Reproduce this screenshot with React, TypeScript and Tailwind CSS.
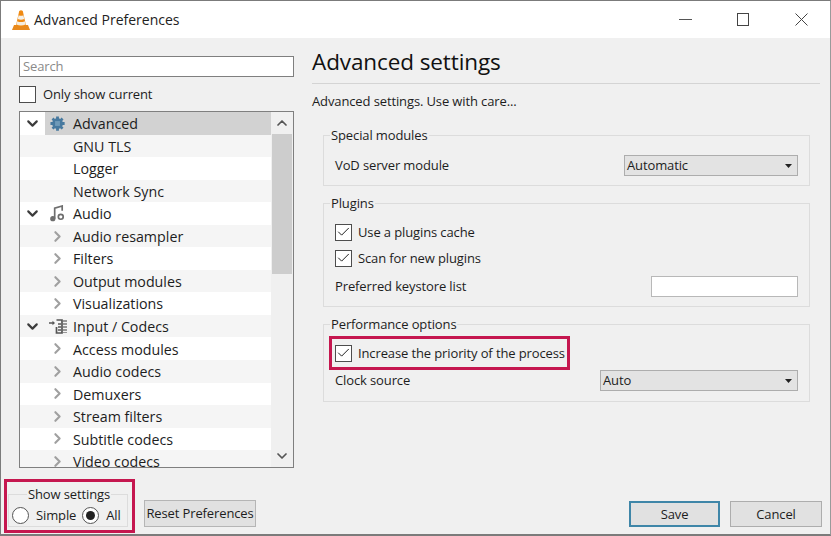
import { Check, ChevronDown, ChevronRight, ChevronUp } from 'lucide-react';
import type { ReactNode } from 'react';

const font = { fontFamily: '"Open Sans", "Noto Sans", sans-serif' };

type TreeRow = { label: string; level: 0 | 1 | 2; icon?: 'gear' | 'music' | 'codec' };

const treeRows: TreeRow[] = [
  { label: 'Advanced', level: 0, icon: 'gear' },
  { label: 'GNU TLS', level: 2 },
  { label: 'Logger', level: 2 },
  { label: 'Network Sync', level: 2 },
  { label: 'Audio', level: 0, icon: 'music' },
  { label: 'Audio resampler', level: 1 },
  { label: 'Filters', level: 1 },
  { label: 'Output modules', level: 1 },
  { label: 'Visualizations', level: 1 },
  { label: 'Input / Codecs', level: 0, icon: 'codec' },
  { label: 'Access modules', level: 1 },
  { label: 'Audio codecs', level: 1 },
  { label: 'Demuxers', level: 1 },
  { label: 'Stream filters', level: 1 },
  { label: 'Subtitle codecs', level: 1 },
  { label: 'Video codecs', level: 1 },
];

const VlcCone = () => (
  <svg width="20" height="22" viewBox="0 0 20 22">
    <path d="M1 21 L3 16 H17 L19 21 Z" fill="#e8891c" />
    <path d="M8.2 2 Q10 0.5 11.8 2 L15 16.5 Q10 19 5 16.5 Z" fill="#f08a12" />
    <path d="M7.6 6.2 Q10 7.4 12.4 6.2 L13.2 10 Q10 11.4 6.8 10 Z" fill="#f4f1ea" />
    <path d="M6.2 12.2 Q10 14 13.8 12.2 L14.6 15.6 Q10 17.6 5.4 15.6 Z" fill="#f4ede0" />
  </svg>
);

const GearIcon = () => (
  <svg width="15" height="15" viewBox="0 0 16 16">
    <path
      d="M6.5 0.5h3v2l1.4.6 1.5-1.4 2 2-1.4 1.5.6 1.3h2v3h-2l-.6 1.4 1.4 1.5-2 2-1.5-1.4-1.4.6v2h-3v-2l-1.3-.6-1.5 1.4-2-2 1.4-1.5-.6-1.4h-2v-3h2l.6-1.3-1.4-1.5 2-2 1.5 1.4 1.3-.6z"
      fill="#47799f"
    />
    <rect x="5.4" y="5.4" width="5.2" height="5.2" fill="#6f9ab8" />
  </svg>
);

const MusicIcon = () => (
  <svg width="15" height="17" viewBox="0 0 16 18" fill="none">
    <circle cx="3" cy="14.5" r="2.8" fill="#6e6e6e" />
    <path d="M5 14.5V3.2L13 1v5" stroke="#6e6e6e" strokeWidth="1.8" />
    <circle cx="11.5" cy="12.5" r="2.6" stroke="#6e6e6e" strokeWidth="1.8" />
  </svg>
);

const CodecIcon = () => (
  <svg width="18" height="15" viewBox="0 0 18 15" fill="none">
    <path d="M0 4h4.5" stroke="#555" strokeWidth="1.5" />
    <path d="M3.5 1.8 6 4 3.5 6.2z" fill="#555" />
    <path d="M7.5 1h5.5v13H7.5V8" stroke="#555" strokeWidth="1.7" />
    <path d="M9 5h3M9 8h3M9 11h3" stroke="#555" strokeWidth="1.3" />
    <path d="M15 1v13M17 1v13" stroke="#666" strokeWidth="1.3" strokeDasharray="2 1" />
  </svg>
);

const rowIcons = { gear: <GearIcon />, music: <MusicIcon />, codec: <CodecIcon /> };

const CheckBox = ({ checked }: { checked?: boolean }) => (
  <span className="flex h-[17px] w-[17px] shrink-0 items-center justify-center border border-[#4d4d4d] bg-white">
    {checked && <Check size={16} strokeWidth={1.5} className="text-[#111]" />}
  </span>
);

const Radio = ({ checked }: { checked?: boolean }) => (
  <span className="flex h-[17px] w-[17px] shrink-0 items-center justify-center rounded-full border border-[#555] bg-white">
    {checked && <span className="h-[9px] w-[9px] rounded-full bg-[#222]" />}
  </span>
);

const Group = ({ title, bottom, children }: { title: string; bottom: string; children: ReactNode }) => (
  <fieldset className={`ml-[11px] w-[487px] border border-[#dcdcdc] pl-[11px] pr-[11px] ${bottom}`}>
    <legend className="ml-[-5px] px-[1px] text-[13px] leading-[18px] tracking-[-0.12px]">{title}</legend>
    {children}
  </fieldset>
);

const Select = ({ value, width }: { value: string; width: string }) => (
  <div className={`flex h-[21px] items-center justify-between border border-[#adadad] bg-[#e3e3e3] pl-[2px] pr-[5px] ${width}`}>
    <span>{value}</span>
    <svg width="7" height="4" viewBox="0 0 7 4">
      <path d="M0 0h7L3.5 4z" fill="#222" />
    </svg>
  </div>
);

const Button = ({ children, className }: { children: ReactNode; className: string }) => (
  <button className={`flex items-center justify-center whitespace-nowrap bg-[#e1e1e1] pt-[1px] text-[13px] tracking-[-0.12px] ${className}`}>
    {children}
  </button>
);

export default function App() {
  return (
    <div
      className="flex h-[536px] w-[831px] flex-col overflow-hidden border border-b-2 border-[#7b7b7b] border-r-[#9a9a9a] bg-[#f0f0f0] text-[#1d1d1d]"
      style={font}
    >
      <div className="flex h-[37px] shrink-0 items-center justify-between bg-white">
        <div className="flex items-center">
          <span className="ml-[10px] flex w-[23px]">
            <VlcCone />
          </span>
          <span className="text-[14px] text-[#222]">Advanced Preferences</span>
        </div>
        <div className="flex items-center text-[#444]">
          <div className="flex w-[58px] justify-center">
            <span className="h-px w-[13px] bg-[#555]" />
          </div>
          <div className="flex w-[58px] justify-center">
            <span className="h-[13px] w-[12px] border border-[#444]" />
          </div>
          <div className="flex w-[58px] justify-center">
            <svg width="13" height="13" viewBox="0 0 13 13">
              <path d="M0.5 0.5l12 12M12.5 0.5l-12 12" stroke="#444" strokeWidth="1" />
            </svg>
          </div>
        </div>
      </div>

      <div className="flex flex-1">
        {/* left column: search, tree, show settings */}
        <div className="ml-[18px] flex w-[275px] shrink-0 flex-col pt-[18px]">
          <div className="flex h-[21px] items-center border border-[#7f7f7f] bg-white pl-[3px] pt-[1px] text-[13px] tracking-[-0.12px] text-[#8a8a8a]">
            Search
          </div>
          <div className="mt-[8px] flex h-[18px] items-center gap-[7px] text-[13px] tracking-[-0.12px]">
            <CheckBox />
            <span className="pt-[1px]">Only show current</span>
          </div>
          <div className="mt-[8px] flex h-[357px] border border-[#7f7f7f] bg-white">
            <div className="flex-1 overflow-hidden">
              {treeRows.map((row, index) => (
                <div
                  key={row.label}
                  className={`flex h-[22.55px] items-center text-[14.25px] ${index % 2 === 1 ? 'bg-[#f5f5f5]' : 'bg-white'}`}
                >
                  <span className="flex w-[25px] shrink-0 justify-center">
                    {row.level === 0 && <ChevronDown size={17} strokeWidth={3} className="text-[#3c3c3c]" />}
                  </span>
                  <div className={`flex h-full flex-1 items-center ${index === 0 ? 'bg-[#d2d2d2]' : ''}`}>
                    <span className="flex w-[28px] shrink-0 justify-center pr-[3px]">
                      {row.level === 1 && <ChevronRight size={17} strokeWidth={3} className="text-[#a0a0a0]" />}
                      {row.icon && rowIcons[row.icon]}
                    </span>
                    <span className="pt-[1px]">{row.label}</span>
                  </div>
                </div>
              ))}
            </div>
            <div className="flex w-[22px] shrink-0 flex-col items-center bg-[#f0f0f0]">
              <span className="flex h-[22px] items-center">
                <ChevronUp size={16} strokeWidth={2.6} className="text-[#555]" />
              </span>
              <span className="h-[140px] w-[20px] bg-[#cdcdcd]" />
              <span className="mt-auto flex h-[22px] items-center">
                <ChevronDown size={16} strokeWidth={2.6} className="text-[#555]" />
              </span>
            </div>
          </div>
          <div className="-ml-[15px] mt-[11px] flex items-end">
            <div className="h-[54px] w-[131px] border-[3px] border-[#c5174f] pl-[1px] pt-[3px]">
              <fieldset className="h-[42px] w-[120px] border border-[#dcdcdc] pl-[3px]">
                <legend className="ml-[15px] px-[1px] text-[13px] leading-[18px] tracking-[-0.12px]">Show settings</legend>
                <div className="mt-[4px] flex items-center text-[13px] leading-[17px] tracking-[-0.12px]">
                  <Radio />
                  <span className="ml-[7px]">Simple</span>
                  <span className="ml-[6px]">
                    <Radio checked />
                  </span>
                  <span className="ml-[7px]">All</span>
                </div>
              </fieldset>
            </div>
            <Button className="mb-[6px] ml-[9px] h-[27px] w-[112px] border border-[#b5b5b5]">Reset Preferences</Button>
          </div>
        </div>

        {/* right column: settings panel */}
        <div className="ml-[18px] flex w-[510px] flex-col pr-[2px] pt-[7px]">
          <div className="text-[22.5px] leading-[34px] tracking-[-0.1px] text-[#111]">Advanced settings</div>
          <div className="mt-[4px] h-px bg-[#d4d4d4]" />
          <div className="mt-[8px] text-[13px] leading-[18px] tracking-[-0.12px]">Advanced settings. Use with care...</div>

          <div className="mt-[16px] text-[13px] leading-[17px] tracking-[-0.12px]">
            <Group title="Special modules" bottom="pb-[9px]">
              <div className="mt-[11px] flex items-center justify-between">
                <span>VoD server module</span>
                <Select value="Automatic" width="w-[174px]" />
              </div>
            </Group>
          </div>

          <div className="mt-[8px] text-[13px] leading-[17px] tracking-[-0.12px]">
            <Group title="Plugins" bottom="pb-[9px]">
              <div className="mt-[11px] flex items-center gap-[6px]">
                <CheckBox checked />
                <span className="pt-[1px]">Use a plugins cache</span>
              </div>
              <div className="mt-[8px] flex items-center gap-[6px]">
                <CheckBox checked />
                <span className="pt-[1px]">Scan for new plugins</span>
              </div>
              <div className="mt-[9px] flex items-center justify-between">
                <span>Preferred keystore list</span>
                <div className="h-[21px] w-[147px] border border-[#b8b8b8] bg-white" />
              </div>
            </Group>
          </div>

          <div className="mt-[8px] text-[13px] leading-[17px] tracking-[-0.12px]">
            <Group title="Performance options" bottom="pb-[10px]">
              <div className="-ml-[6px] mt-[3px] flex h-[34px] w-[241px] items-center gap-[6px] border-[3px] border-[#c5174f] pl-[3px]">
                <CheckBox checked />
                <span className="whitespace-nowrap">Increase the priority of the process</span>
              </div>
              <div className="flex items-center justify-between">
                <span>Clock source</span>
                <Select value="Auto" width="w-[198px]" />
              </div>
            </Group>
          </div>

          <div className="-mr-[2px] mb-[7px] mt-auto flex justify-end gap-[10px]">
            <Button className="h-[26px] w-[91px] border-2 border-[#3f86a8]">Save</Button>
            <Button className="h-[26px] w-[92px] border border-[#adadad]">Cancel</Button>
          </div>
        </div>
      </div>
    </div>
  );
}
